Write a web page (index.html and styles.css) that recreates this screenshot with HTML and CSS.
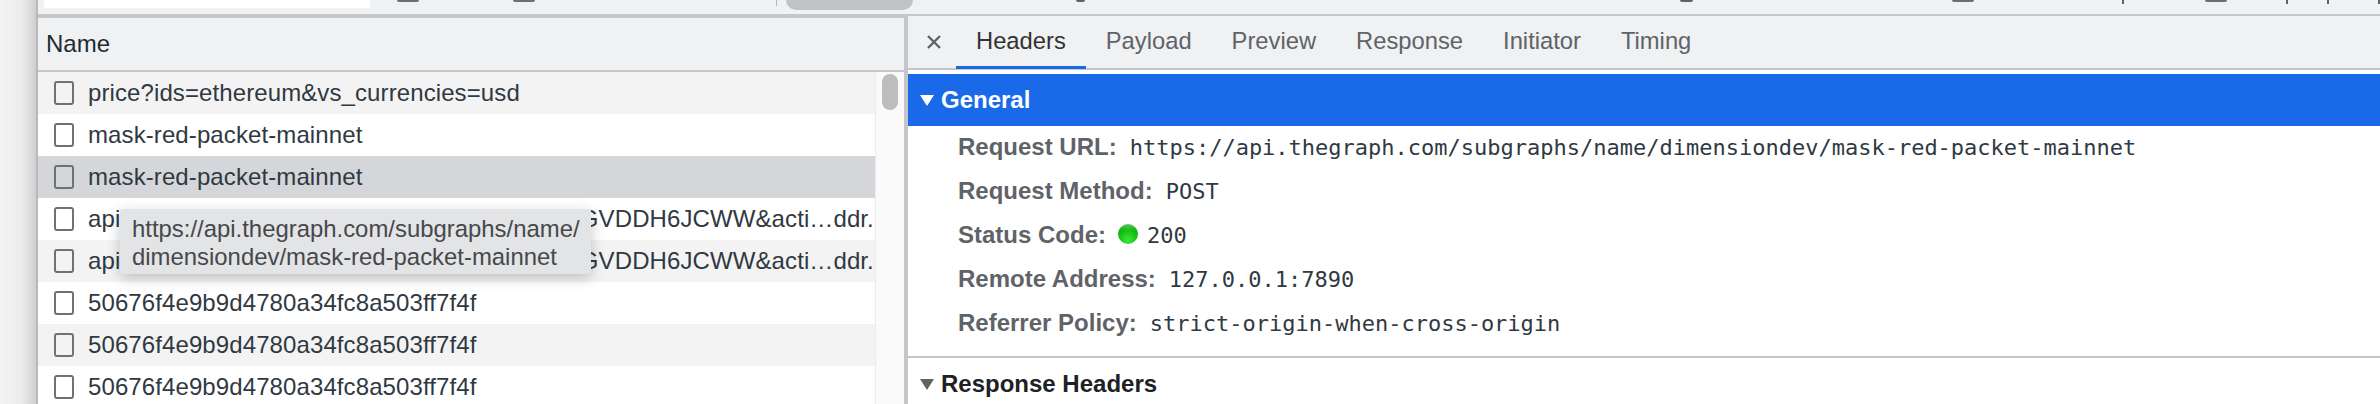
FILE: index.html
```html
<!DOCTYPE html>
<html lang="en">
<head>
  <meta charset="UTF-8" />
  <title>Network panel</title>
  <link rel="stylesheet" href="styles.css">
</head>
<body>
  <div class="gutter"></div>
  <div class="devtools">
    <div class="toolbar">
      <div class="filter"></div>
      <div class="stub stub-invert"></div>
      <div class="stub stub-hide"></div>
      <div class="sep"></div>
      <div class="pill"></div>
      <div class="stub-g"></div>
      <div class="stub-g stub-manifest"></div>
      <div class="stub stub-cookies"></div>
      <div class="tick tick-a"></div>
      <div class="stub stub-blocked"></div>
      <div class="tick tick-b"></div>
      <div class="tick tick-c"></div>
      <div class="tick tick-d"></div>
    </div>
    <div class="panes">
      <div class="list-pane">
        <div class="list-head">Name</div>
        <div class="list-body">
          <div class="rows">
            <div class="row alt"><span class="check"></span><span class="row-name">price?ids=ethereum&amp;vs_currencies=usd</span></div>
            <div class="row"><span class="check"></span><span class="row-name">mask-red-packet-mainnet</span></div>
            <div class="row selected"><span class="check"></span><span class="row-name">mask-red-packet-mainnet</span></div>
            <div class="row"><span class="check"></span><span class="row-name">api?module=account&amp;action=txlist&amp;apikey=JJGVDDH6JCWW&amp;acti…ddr.</span></div>
            <div class="row alt"><span class="check"></span><span class="row-name">api?module=account&amp;action=txlist&amp;apikey=JJGVDDH6JCWW&amp;acti…ddr.</span></div>
            <div class="row"><span class="check"></span><span class="row-name">50676f4e9b9d4780a34fc8a503ff7f4f</span></div>
            <div class="row alt"><span class="check"></span><span class="row-name">50676f4e9b9d4780a34fc8a503ff7f4f</span></div>
            <div class="row"><span class="check"></span><span class="row-name">50676f4e9b9d4780a34fc8a503ff7f4f</span></div>
          </div>
          <div class="track"><div class="thumb"></div></div>
        </div>
        <div class="tooltip">https://api.thegraph.com/subgraphs/name/<br>dimensiondev/mask-red-packet-mainnet</div>
      </div>
      <div class="detail-pane">
        <div class="tabs">
          <svg class="close" width="14" height="14" viewBox="0 0 14 14"><path d="M1 1l12 12M13 1L1 13" stroke="#5f6368" stroke-width="2.4" fill="none"/></svg>
          <div class="tab active">Headers</div>
          <div class="tab">Payload</div>
          <div class="tab">Preview</div>
          <div class="tab">Response</div>
          <div class="tab">Initiator</div>
          <div class="tab">Timing</div>
        </div>
        <div class="section-title focused"><span class="arrow"></span>General</div>
        <div class="fields">
          <div class="field"><span class="label">Request URL:</span><span class="value">https://api.thegraph.com/subgraphs/name/dimensiondev/mask-red-packet-mainnet</span></div>
          <div class="field"><span class="label">Request Method:</span><span class="value">POST</span></div>
          <div class="field"><span class="label">Status Code:</span><span class="dot"></span><span class="value status">200</span></div>
          <div class="field"><span class="label">Remote Address:</span><span class="value">127.0.0.1:7890</span></div>
          <div class="field"><span class="label">Referrer Policy:</span><span class="value">strict-origin-when-cross-origin</span></div>
        </div>
        <div class="section-title"><span class="arrow"></span>Response Headers</div>
      </div>
    </div>
  </div>
</body>
</html>
```

FILE: styles.css
```css
html, body {
  margin: 0;
  padding: 0;
  height: 404px;
  overflow: hidden;
}

body {
  display: flex;
  font-family: "Liberation Sans", Arial, sans-serif;
  font-size: 24px;
  color: #303942;
  background: #fff;
}

.gutter {
  width: 36px;
  flex: none;
  background: linear-gradient(to right, #f4f4f4, #ececec 60%, #cfcfcf);
  border-right: 2px solid #b9b9b9;
}

.devtools {
  flex: 1;
  display: flex;
  flex-direction: column;
  min-width: 0;
}

/* only the bottom edge of the toolbar is in the frame */
.toolbar {
  height: 14px;
  flex: none;
  display: flex;
  align-items: flex-start;
  background: #f0f1f3;
  border-bottom: 2px solid #c4c6cc;
  overflow: hidden;
}

.toolbar > div {
  flex: none;
}

.filter {
  width: 326px;
  height: 8px;
  margin-left: 6px;
  background: #fff;
}

.stub {
  width: 22px;
  height: 2px;
  background: #6e6e6e;
  border-radius: 0 0 4px 4px;
}

.stub-invert { margin-left: 27px; }
.stub-hide { margin-left: 94px; }

.sep {
  width: 1px;
  height: 6px;
  margin-left: 241px;
  background: #b4b6ba;
}

.pill {
  width: 127px;
  height: 10px;
  margin-left: 9px;
  background: #c0c2c7;
  border-radius: 0 0 10px 10px;
}

.stub-g {
  width: 9px;
  height: 2px;
  margin-left: 163px;
  background: #5f6368;
  border-radius: 0 0 4px 4px;
}

.stub-manifest { width: 13px; margin-left: 595px; }
.stub-cookies { margin-left: 259px; }
.stub-blocked { margin-left: 81px; }

.tick {
  width: 2px;
  height: 4px;
  background: #5f6368;
}

.tick-a { margin-left: 148px; }
.tick-b { margin-left: 59px; }
.tick-c { margin-left: 39px; }
.tick-d { margin-left: 49px; }

.panes {
  flex: 1;
  display: flex;
  min-height: 0;
}

.list-pane {
  position: relative;
  width: 866px;
  flex: none;
  border-right: 4px solid #c4c6cc;
}

.list-head {
  height: 52px;
  line-height: 52px;
  padding-left: 8px;
  background: #f0f1f3;
  border-top: 2px solid #c4c6cc;
  border-bottom: 2px solid #c4c6cc;
  color: #202b33;
}

.list-body {
  display: flex;
}

.rows {
  width: 837px;
  flex: none;
}

.row {
  display: flex;
  align-items: center;
  height: 42px;
  padding-left: 16px;
  background: #fff;
  overflow: hidden;
}

.row.alt { background: #f3f3f3; }
.row.selected { background: #d5d6da; }

.check {
  width: 20px;
  height: 24px;
  flex: none;
  box-sizing: border-box;
  border: 2px solid #6f7175;
  border-radius: 3px;
  margin-right: 14px;
}

.row-name {
  white-space: nowrap;
  letter-spacing: 0.1px;
}

.track {
  flex: 1;
  height: 332px;
  position: relative;
  background: #fafafa;
  border-left: 1px solid #ebebeb;
}

.thumb {
  width: 16px;
  height: 36px;
  margin: 2px 0 0 6px;
  background: #bdbdbd;
  border-radius: 8px;
}

.tooltip {
  position: absolute;
  left: 82px;
  top: 193px;
  width: 471px;
  height: 65px;
  padding-left: 12px;
  font-size: 23.9px;
  line-height: 28px;
  padding-top: 6px;
  box-sizing: border-box;
  background: #e3e4e6;
  color: #46484c;
  border-radius: 2px;
  box-shadow: 0 4px 14px rgba(0, 0, 0, 0.22);
  white-space: nowrap;
}

.detail-pane {
  flex: 1;
  min-width: 0;
}

.tabs {
  display: flex;
  align-items: stretch;
  height: 52px;
  background: #f0f1f3;
  border-bottom: 2px solid #c4c6cc;
  margin-bottom: 4px;
  padding-left: 48px;
  position: relative;
}

.close {
  position: absolute;
  left: 19px;
  top: 19px;
}

.tab {
  padding: 0 20px;
  font-size: 23.75px;
  line-height: 50px;
  color: #5f6368;
  height: 53px;
  box-sizing: border-box;
}

.tab.active {
  color: #333;
  border-bottom: 3px solid #1a69e8;
}

.section-title {
  display: flex;
  align-items: center;
  height: 52px;
  padding-left: 12px;
  font-weight: bold;
  color: #202124;
}

.section-title.focused {
  background: #1a69e8;
  color: #fff;
}

.arrow {
  width: 0;
  height: 0;
  margin-right: 7px;
  border-left: 7px solid transparent;
  border-right: 7px solid transparent;
  border-top: 11px solid #5f6368;
}

.focused .arrow {
  border-top-color: #fff;
}

.fields {
  padding: 0 0 11px 50px;
  margin-top: -1px;
  border-bottom: 2px solid #c4c6cc;
}

.field {
  display: flex;
  align-items: center;
  height: 44px;
  white-space: nowrap;
}

.label {
  font-weight: bold;
  color: #5f6368;
  margin-right: 13px;
}

.value {
  font-family: "DejaVu Sans Mono", "Liberation Mono", monospace;
  font-size: 22px;
  color: #303942;
}

.dot {
  width: 20px;
  height: 20px;
  border-radius: 50%;
  margin: -2px 9px 0 -1px;
  background:
    linear-gradient(to bottom, rgba(255, 255, 255, 0.35), transparent 35%),
    radial-gradient(circle at 50% 80%, #3ee83e, #0cb80c 60%, #0a9a0a);
}
```
